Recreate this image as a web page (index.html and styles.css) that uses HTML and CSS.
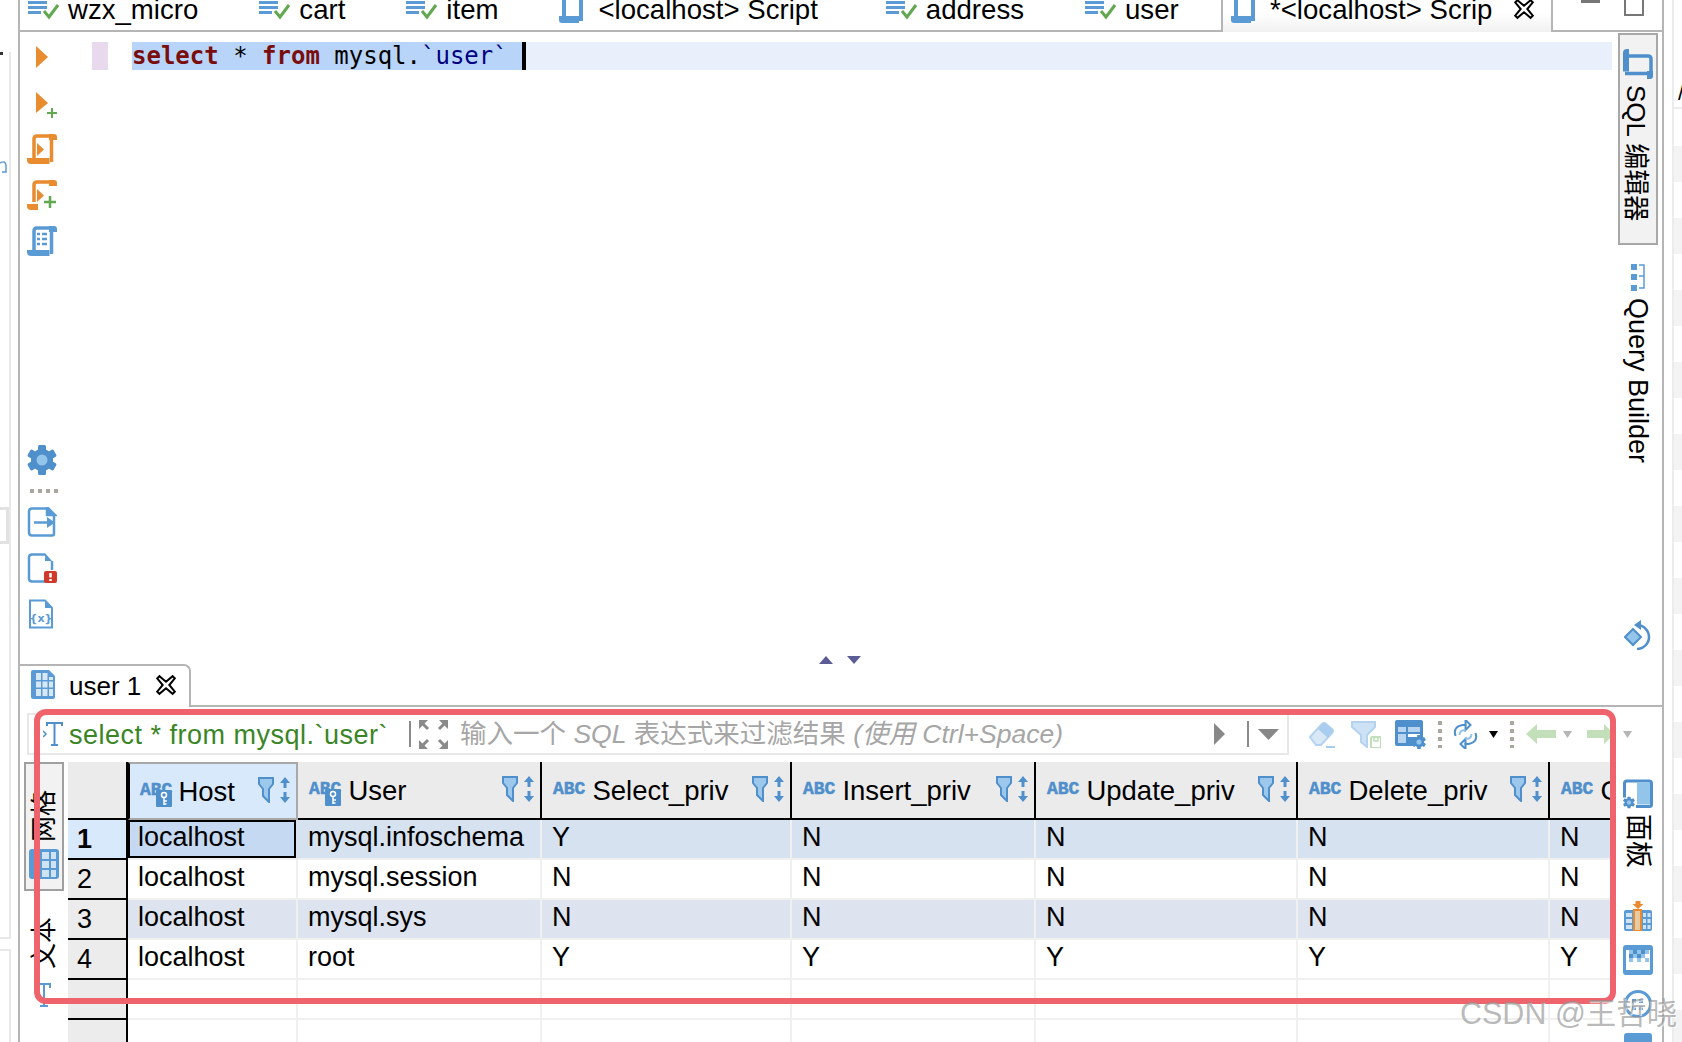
FILE: index.html
```html
<!DOCTYPE html>
<html lang="zh">

<head>
    <meta charset="UTF-8">
    <meta name="viewport" content="width=device-width, initial-scale=1.0">
    <link rel="stylesheet" href="styles.css">
    <title>SQL Editor</title>
</head>

<body>

    <svg class="sprite" xmlns="http://www.w3.org/2000/svg">
        <symbol id="i-list" viewBox="0 0 32 20">
            <path d="M0 2.500h19M0 7.500h19M0 12.500h13" stroke="#5b9bd5" stroke-width="3" fill="none" />
            <path d="M16 11l5 6 9-12" stroke="#62a850" stroke-width="3" fill="none" />
        </symbol>
        <symbol id="i-scroll" viewBox="0 0 30 30">
            <path d="M7 24V5q0-3 3-3h16" stroke="currentColor" stroke-width="3.500" fill="none" />
            <path d="M24.500 2V28" stroke="currentColor" stroke-width="3.500" fill="none" />
            <path d="M22 0h5q3 0 3 3v3h-8zM0 24h22.500v6H4q-4 0-4-4z" fill="currentColor" />
        </symbol>
        <symbol id="i-close" viewBox="0 0 20 20">
            <path d="M2 4l2-2 6 5 6-5 2 2-5 6 5 6-2 2-6-5-6 5-2-2 5-6z" fill="#fff" stroke="#000" stroke-width="1.800" />
        </symbol>
        <symbol id="i-funnel" viewBox="0 0 16 26">
            <path d="M1 1H15V7L11 12V25L5 19V12L1 7Z" fill="#9cc8ec" stroke="#4f8fcb" stroke-width="2" />
        </symbol>
        <symbol id="i-sort" viewBox="0 0 10 26">
            <path d="M5 0l5 6H6.500v5h-3V6H0zM5 26l5-6H6.500v-5h-3v5H0z" fill="#4f8fcb" />
        </symbol>
        <symbol id="i-key" viewBox="0 0 16 17">
            <rect width="16" height="17" rx="1" fill="#4f8fcb" />
            <circle cx="8" cy="5" r="2.500" fill="none" stroke="#fff" stroke-width="1.500" />
            <path d="M8 7.500V15M8 11h3M8 14h2.500" stroke="#fff" stroke-width="1.500" fill="none" />
        </symbol>
        <symbol id="i-gear" viewBox="0 0 30 30">
            <g fill="#4f8fcb">
                <circle cx="15" cy="15" r="11" />
                <rect x="11" y="0" width="8" height="30" rx="1.500" />
                <rect x="11" y="0" width="8" height="30" rx="1.500" transform="rotate(60 15 15)" />
                <rect x="11" y="0" width="8" height="30" rx="1.500" transform="rotate(120 15 15)" />
            </g>
            <circle cx="15" cy="15" r="5.500" fill="#93c4ea" />
        </symbol>
    </svg>

    <div class="page">

        <div class="side-strip">
            <div class="strip-panel">
                <span class="strip-tick"></span>
                <svg class="strip-arc" viewBox="0 0 7 14">
                    <path d="M0 4q5-3 6 2v7h-4" fill="none" stroke="#5b9bd5" stroke-width="1.500" />
                </svg>
                <span class="strip-box"></span>
            </div>
            <div class="strip-panel strip-panel-low"></div>
        </div>

        <div class="workbench">

            <div class="tabbar">
                <div class="tab-list">
                    <div class="tab"><svg class="tab-icon"><use href="#i-list" /></svg>wzx_micro</div>
                    <div class="tab"><svg class="tab-icon"><use href="#i-list" /></svg>cart</div>
                    <div class="tab"><svg class="tab-icon"><use href="#i-list" /></svg>item</div>
                    <div class="tab tab-script"><svg class="tab-scroll" viewBox="0 0 25 23">
                            <path d="M5 0V16M22 0V21" stroke="#5b9bd5" stroke-width="4" fill="none" />
                            <path d="M0 16h20v7H3q-3 0-3-3z" fill="#5b9bd5" />
                        </svg>&lt;localhost&gt; Script</div>
                    <div class="tab tab-address"><svg class="tab-icon"><use href="#i-list" /></svg>address</div>
                    <div class="tab"><svg class="tab-icon"><use href="#i-list" /></svg>user</div>
                </div>
                <div class="tab-active">
                    <svg class="tab-scroll" viewBox="0 0 25 23">
                        <path d="M5 0V16M22 0V21" stroke="#5b9bd5" stroke-width="4" fill="none" />
                        <path d="M0 16h20v7H3q-3 0-3-3z" fill="#5b9bd5" />
                    </svg>
                    <span class="tab-active-name">*&lt;localhost&gt; Scrip</span>
                    <svg class="tab-close"><use href="#i-close" /></svg>
                </div>
                <div class="window-btns">
                    <span class="btn-min"></span>
                    <span class="btn-max"></span>
                </div>
            </div>

            <div class="editor">
                <div class="editor-tools">
                    <div class="tool-group">
                        <svg class="tool" viewBox="0 0 30 30"><path d="M9 4l12 11L9 26z" fill="#e98b2f" /></svg>
                        <svg class="tool" viewBox="0 0 30 30">
                            <path d="M9 4l12 11L9 25z" fill="#e98b2f" />
                            <path d="M25 20v10M20 25h10" stroke="#62a850" stroke-width="2" />
                        </svg>
                        <svg class="tool tool-orange" viewBox="0 0 30 30">
                            <use href="#i-scroll" />
                            <path d="M10 9l7 6.500-7 6.500z" fill="#e98b2f" />
                        </svg>
                        <svg class="tool tool-orange" viewBox="0 0 30 30">
                            <path d="M7 22V5q0-3 3-3h16" stroke="currentColor" stroke-width="3.500" fill="none" />
                            <path d="M22 0h5q3 0 3 3v3h-8zM0 24h11v6H4q-4 0-4-4z" fill="currentColor" />
                            <path d="M10 9l7 6.500-7 6.500z" fill="#e98b2f" />
                            <path d="M23 16v12M17 22h12" stroke="#62a850" stroke-width="2.500" />
                        </svg>
                        <svg class="tool tool-blue" viewBox="0 0 30 30">
                            <use href="#i-scroll" />
                            <path d="M10 8h3M15 8h5M10 13h3M15 13h5M10 18h3M15 18h5" stroke="#5b9bd5" stroke-width="2.500" />
                        </svg>
                    </div>
                    <div class="tool-group">
                        <svg class="tool"><use href="#i-gear" /></svg>
                        <div class="tool-dots"></div>
                        <svg class="tool" viewBox="0 0 30 30">
                            <path d="M20 1.500H5q-3 0-3 3v21q0 3 3 3h20q2 0 2-2V8z" fill="#fff" stroke="#5b9bd5" stroke-width="2.500" />
                            <path d="M20 0v8h8zM7 15.500h17" fill="#5b9bd5" stroke="#5b9bd5" stroke-width="2.500" />
                            <path d="M20 10l8 5.500-8 5.500z" fill="#5b9bd5" />
                        </svg>
                        <svg class="tool" viewBox="0 0 30 30">
                            <path d="M18 1.500H5q-3 0-3 3v21q0 3 3 3h14M25 17V8z" fill="#fff" stroke="#5b9bd5" stroke-width="2.500" />
                            <path d="M18 0l7 8h-7z" fill="#5b9bd5" />
                            <rect x="17" y="18" width="13" height="12" rx="2" fill="#cf3a2a" />
                            <path d="M23.500 20v4.500M23.500 26v2" stroke="#fff" stroke-width="2.500" />
                        </svg>
                        <svg class="tool" viewBox="0 0 30 30">
                            <path d="M3 1.500h15L25 9v19.500H3z" fill="#fff" stroke="#5b9bd5" stroke-width="2" />
                            <path d="M18 1v8h7z" fill="#5b9bd5" />
                            <text x="14" y="23" class="tool-var">{x}</text>
                        </svg>
                    </div>
                </div>

                <div class="gutter"><span class="gutter-mark"></span></div>

                <div class="code-area">
                    <div class="code-line"><span class="code-sel"><b class="kw">select</b> * <b class="kw">from</b> mysql.<span class="quoted">`user`</span> </span><span class="caret"></span></div>
                    <div class="sash">
                        <svg class="sash-arrow" viewBox="0 0 14 8"><path d="M7 0l7 8H0z" /></svg>
                        <svg class="sash-arrow" viewBox="0 0 14 8"><path d="M0 0h14L7 8z" /></svg>
                    </div>
                </div>

                <div class="editor-side">
                    <div class="side-tab">
                        <svg class="side-tab-icon"><use href="#i-scroll" /></svg>
                        <span class="vtext">SQL 编辑器</span>
                    </div>
                    <div class="side-item">
                        <svg class="side-qb-icon" viewBox="0 0 14 27">
                            <path d="M0 0h6v6H0zM0 10h6v6H0zM0 21h6v6H0z" fill="#5b9bd5" />
                            <path d="M8 1h5v23H8M8 12h5" fill="none" stroke="#5b9bd5" stroke-width="1.500" />
                        </svg>
                        <span class="vtext">Query Builder</span>
                    </div>
                    <svg class="side-history" viewBox="0 0 28 30">
                        <path d="M9 9l8 8-8 8-8-8z" fill="#93c4ea" stroke="#4f8fcb" stroke-width="2" />
                        <path d="M13 5a11 11 0 1 1 0 24" fill="none" stroke="#4f8fcb" stroke-width="2.500" />
                        <path d="M17 0v10l-7-5z" fill="#4f8fcb" />
                    </svg>
                </div>
            </div>

            <div class="results">
                <div class="result-tabbar">
                    <div class="result-tab">
                        <svg class="result-tab-icon" viewBox="0 0 24 29">
                            <path d="M2 0h16l6 6v21q0 2-2 2H2q-2 0-2-2V2q0-2 2-2z" fill="#5b9bd5" />
                            <path d="M5 3h5v7H5zM11.500 3h5v7h-5zM18 7h4v3h-4zM5 11.500h5v6H5zM11.500 11.500h5v6h-5zM18 11.500h4v6h-4zM5 19h5v7H5zM11.500 19h5v7h-5zM18 19h4v7h-4z" fill="#d6e7f6" />
                        </svg>
                        <span>user 1</span>
                        <svg class="tab-close"><use href="#i-close" /></svg>
                    </div>
                </div>

                <div class="filter-row">
                    <div class="filter-box">
                        <svg class="filter-t" viewBox="0 0 20 24">
                            <path d="M4 4V1h15v3M11.500 1v22M8 23h7" fill="none" stroke="#4f8fcb" stroke-width="2" />
                            <path d="M0 9l3 3-3 3" fill="none" stroke="#4f8fcb" stroke-width="1.500" />
                        </svg>
                        <span class="filter-sql">select * from mysql.`user`</span>
                        <span class="filter-sep"></span>
                        <svg class="filter-expand" viewBox="0 0 29 29">
                            <path d="M0 0h9L0 9zM29 0v9l-9-9zM0 29v-9l9 9zM29 29h-9l9-9z" fill="#8a8a8a" />
                            <path d="M3 3l6 6M26 3l-6 6M3 26l6-6M26 26l-6-6" stroke="#8a8a8a" stroke-width="3" />
                        </svg>
                        <span class="filter-hint">输入一个 <i>SQL</i> 表达式来过滤结果 <i>(使用 Ctrl+Space)</i></span>
                        <svg class="filter-go" viewBox="0 0 11 22"><path d="M0 0l11 11L0 22z" /></svg>
                        <span class="filter-sep filter-sep-end"></span>
                        <svg class="filter-drop" viewBox="0 0 21 11"><path d="M0 0h21L10.500 11z" /></svg>
                    </div>

                    <div class="toolbar">
                        <svg class="tb-icon" width="27" height="27" viewBox="0 0 27 27">
                            <path d="M2 16L14 3q2-2 4 0l6 5q2 2 0 4L13 24H8z" fill="#d8e8f6" stroke="#b5d3ee" stroke-width="2" />
                            <path d="M10 8l10 9 4-5q2-2 0-4l-6-5q-2-2-4 0z" fill="#a9cdee" />
                            <path d="M18 26h9" stroke="#a9cdee" stroke-width="2" />
                        </svg>
                        <svg class="tb-icon tb-funnel" width="30" height="27" viewBox="0 0 30 27">
                            <path d="M1 1h23v5l-8 8v12l-6-5v-7L1 6z" fill="#cde2f5" stroke="#b5d3ee" stroke-width="2" />
                            <rect x="20" y="16" width="10" height="11" rx="1.500" fill="#fff" stroke="#bfdfb6" stroke-width="2" />
                            <path d="M23 16v4h4v-4" fill="none" stroke="#bfdfb6" stroke-width="1.500" />
                        </svg>
                        <svg class="tb-icon tb-table" width="31" height="29" viewBox="0 0 31 29">
                            <rect width="28" height="26" rx="2" fill="#4f8fcb" />
                            <path d="M3 7h8v5H3zM3 14h8v9H3zM13 7h12v5H13z" fill="#b7d5f0" />
                            <path d="M13 14h12v3H13z" fill="#fff" />
                            <use href="#i-gear" x="17" y="15" width="14" height="14" />
                        </svg>
                        <div class="tb-dots"></div>
                        <svg class="tb-icon tb-refresh" width="27" height="29" viewBox="0 0 26 29">
                            <path d="M3 16Q0 7 10 5h4M23 13q3 9-7 11h-4" fill="none" stroke="#4f8fcb" stroke-width="2" />
                            <path d="M13 0l5 5-5 5zM13 19l-5 5 5 5z" fill="none" stroke="#4f8fcb" stroke-width="2" />
                            <path d="M7 15q0-5 6-5M19 14q0 5-6 5" fill="none" stroke="#93c4ea" stroke-width="2" />
                        </svg>
                        <svg class="tb-caret tb-refresh" viewBox="0 0 9 7"><path d="M0 0h9L4.500 7z" /></svg>
                        <div class="tb-dots"></div>
                        <svg class="tb-icon" width="30" height="20" viewBox="0 0 30 20"><path d="M0 10L11 0v6h19v8H11v6z" fill="#c3dfb9" /></svg>
                        <svg class="tb-caret tb-caret-off tb-back" viewBox="0 0 9 7"><path d="M0 0h9L4.500 7z" /></svg>
                        <svg class="tb-icon tb-next" width="27" height="20" viewBox="0 0 27 20"><path d="M27 10L17 0v6H0v8h17v6z" fill="#c3dfb9" /></svg>
                        <svg class="tb-caret tb-caret-off tb-last" viewBox="0 0 9 7"><path d="M0 0h9L4.500 7z" /></svg>
                    </div>
                </div>

                <div class="result-body">
                    <div class="view-tabs">
                        <div class="view-tab view-tab-on">
                            <span class="vtext vtext-up">网格</span>
                            <svg class="view-icon" viewBox="0 0 30 30">
                                <rect width="30" height="30" rx="3" fill="#5b9bd5" />
                                <path d="M5 3h6v7H5zM13 3h7v7h-7zM22 3h5v7h-5zM5 12h6v7H5zM13 12h7v7h-7zM22 12h5v7h-5zM5 21h6v7H5zM13 21h7v7h-7zM22 21h5v7h-5z" fill="#cfe3f5" />
                            </svg>
                        </div>
                        <div class="view-tab">
                            <span class="vtext vtext-up">文本</span>
                            <svg class="view-text-icon" viewBox="0 0 14 24">
                                <path d="M1 5V1h12v4M7 1v22M3 23h8" fill="none" stroke="#5b9bd5" stroke-width="2" />
                            </svg>
                        </div>
                    </div>

                    <div class="grid-wrap">
                        <table class="grid">
                            <colgroup>
                                <col class="c-num">
                                <col class="c-host">
                                <col class="c-user">
                                <col class="c-select">
                                <col class="c-insert">
                                <col class="c-update">
                                <col class="c-delete">
                                <col class="c-create">
                            </colgroup>
                            <thead>
                                <tr>
                                    <th class="num-head"></th>
                                    <th class="head-on">
                                        <div class="col-head"><span class="abc abc-key">ABC</span><svg class="key"><use href="#i-key" /></svg><span class="col-name">Host</span><svg class="funnel"><use href="#i-funnel" /></svg><svg class="sort"><use href="#i-sort" /></svg></div>
                                    </th>
                                    <th>
                                        <div class="col-head"><span class="abc abc-key">ABC</span><svg class="key"><use href="#i-key" /></svg><span class="col-name">User</span><svg class="funnel"><use href="#i-funnel" /></svg><svg class="sort"><use href="#i-sort" /></svg></div>
                                    </th>
                                    <th>
                                        <div class="col-head"><span class="abc">ABC</span><span class="col-name">Select_priv</span><svg class="funnel"><use href="#i-funnel" /></svg><svg class="sort"><use href="#i-sort" /></svg></div>
                                    </th>
                                    <th>
                                        <div class="col-head"><span class="abc">ABC</span><span class="col-name">Insert_priv</span><svg class="funnel"><use href="#i-funnel" /></svg><svg class="sort"><use href="#i-sort" /></svg></div>
                                    </th>
                                    <th>
                                        <div class="col-head"><span class="abc">ABC</span><span class="col-name">Update_priv</span><svg class="funnel"><use href="#i-funnel" /></svg><svg class="sort"><use href="#i-sort" /></svg></div>
                                    </th>
                                    <th>
                                        <div class="col-head"><span class="abc">ABC</span><span class="col-name">Delete_priv</span><svg class="funnel"><use href="#i-funnel" /></svg><svg class="sort"><use href="#i-sort" /></svg></div>
                                    </th>
                                    <th>
                                        <div class="col-head"><span class="abc">ABC</span><span class="col-name">Create_priv</span></div>
                                    </th>
                                </tr>
                            </thead>
                            <tbody>
                                <tr class="row-first">
                                    <th class="num num-on">1</th>
                                    <td class="cell-on">localhost</td>
                                    <td>mysql.infoschema</td>
                                    <td>Y</td>
                                    <td>N</td>
                                    <td>N</td>
                                    <td>N</td>
                                    <td>N</td>
                                </tr>
                                <tr>
                                    <th class="num">2</th>
                                    <td>localhost</td>
                                    <td>mysql.session</td>
                                    <td>N</td>
                                    <td>N</td>
                                    <td>N</td>
                                    <td>N</td>
                                    <td>N</td>
                                </tr>
                                <tr class="row-alt">
                                    <th class="num">3</th>
                                    <td>localhost</td>
                                    <td>mysql.sys</td>
                                    <td>N</td>
                                    <td>N</td>
                                    <td>N</td>
                                    <td>N</td>
                                    <td>N</td>
                                </tr>
                                <tr>
                                    <th class="num">4</th>
                                    <td>localhost</td>
                                    <td>root</td>
                                    <td>Y</td>
                                    <td>Y</td>
                                    <td>Y</td>
                                    <td>Y</td>
                                    <td>Y</td>
                                </tr>
                                <tr>
                                    <th class="num"></th>
                                    <td></td><td></td><td></td><td></td><td></td><td></td><td></td>
                                </tr>
                                <tr>
                                    <th class="num"></th>
                                    <td></td><td></td><td></td><td></td><td></td><td></td><td></td>
                                </tr>
                            </tbody>
                        </table>
                    </div>

                    <div class="panels">
                        <svg class="panel-icon" viewBox="0 0 30 29">
                            <path d="M4 1.500h22q2.500 0 2.500 2.500v21q0 2-2 2H13" fill="none" stroke="#4f8fcb" stroke-width="3" />
                            <path d="M1.500 18V4q0-2.500 2.500-2.500" fill="none" stroke="#4f8fcb" stroke-width="3" />
                            <rect x="14" y="3" width="13" height="22" fill="#93c4ea" />
                            <use href="#i-gear" x="0" y="17" width="12" height="12" />
                        </svg>
                        <span class="vtext panel-label">面板</span>
                        <svg class="panel-icon panel-icon-col" viewBox="0 0 28 30">
                            <rect y="9" width="28" height="21" rx="2" fill="#5b9bd5" />
                            <path d="M2 12h6v4H2zM2 18h6v4H2zM2 24h6v4H2zM19 12h3v4h-3zM23.500 12h3v4h-3zM19 18h3v4h-3zM23.500 18h3v4h-3zM19 24h3v4h-3zM23.500 24h3v4h-3z" fill="#cfe3f5" />
                            <rect x="10" y="9" width="7" height="21" fill="#e7c9a4" stroke="#e98b2f" stroke-width="2" />
                            <path d="M11.500 0h5v3h3l-5.500 5-5.500-5h3z" fill="#e98b2f" />
                        </svg>
                        <svg class="panel-icon" viewBox="0 0 30 30">
                            <rect width="30" height="30" rx="3" fill="#5b9bd5" />
                            <rect x="3" y="5" width="24" height="20" fill="#fff" />
                            <path d="M6 5h4v4H6zM14 5h4v4h-4zM22 5h4v4h-4zM10 9h4v4h-4zM18 9h4v4h-4zM6 13h4v4H6zM14 13h4v4h-4zM22 13h4v4h-4z" fill="#93c4ea" />
                            <path d="M10 5h4v4h-4zM18 5h4v4h-4zM6 9h4v4H6zM14 9h4v4h-4z" fill="#4f8fcb" />
                        </svg>
                        <svg class="panel-icon" viewBox="0 0 28 30">
                            <circle cx="14" cy="15" r="12.500" fill="#fff" stroke="#5b9bd5" stroke-width="3" />
                            <path d="M8 10h4v4H8zM15 10h4v4h-4zM8 17h4v4H8zM15 17h4v4h-4z" fill="#5b9bd5" />
                        </svg>
                        <svg class="panel-icon" viewBox="0 0 28 30">
                            <rect width="28" height="30" rx="3" fill="#5b9bd5" />
                        </svg>
                    </div>
                </div>
            </div>
        </div>

        <div class="far-strip">
            <div class="far-top"><span class="far-char">/</span></div>
            <div class="far-note"></div>
            <div class="far-rows"></div>
        </div>
    </div>

    <div class="annotation"></div>
    <div class="watermark">CSDN @王哲晓</div>

</body>

</html>
```

FILE: styles.css
```css
* {
    box-sizing: border-box;
}

body {
    position: relative;
    margin: 0;
    width: 1682px;
    height: 1042px;
    overflow: hidden;
    background-color: #fff;
    color: #000;
    font-family: "Liberation Sans", "Noto Sans CJK SC", sans-serif;
    font-size: 27px;
}

svg {
    display: block;
    flex: none;
}

.sprite {
    display: none;
}

.page {
    display: flex;
    height: 1042px;
}

/* far left strip, the neighbouring view cut off by the crop */
.side-strip {
    width: 20px;
    flex: none;
    border-right: 2px solid #b5b5b5;
}

.strip-panel {
    position: relative;
    width: 11px;
    height: 887px;
    border-right: 2px solid #e8e8e8;
    border-bottom: 2px solid #e8e8e8;
}

.strip-panel-low {
    height: 145px;
    margin-top: 10px;
    border-top: 2px solid #e8e8e8;
    border-bottom: 0;
}

.strip-tick {
    display: block;
    width: 3px;
    height: 3px;
    margin-top: 52px;
    background-color: #333;
}

.strip-arc {
    width: 7px;
    height: 14px;
    margin-top: 104px;
}

.strip-box {
    display: block;
    width: 9px;
    height: 37px;
    margin-top: 334px;
    background-color: #fff;
    border: 3px solid #e2e2e2;
    border-left: 0;
}

.workbench {
    flex: 1;
    min-width: 0;
    display: flex;
    flex-direction: column;
}

/* top tabs */
.tabbar {
    display: flex;
    height: 32px;
    flex: none;
    overflow: hidden;
    font-size: 27.600px;
}

.tab-list {
    display: flex;
    gap: 61px;
    width: 1201px;
    flex: none;
    padding-left: 8px;
    border-bottom: 2px solid #b5b5b5;
    line-height: 32px;
}

.tab {
    display: flex;
    gap: 8px;
    height: 32px;
    margin-top: -6px;
    white-space: nowrap;
}

.tab-icon {
    width: 32px;
    height: 20px;
    margin-top: 6px;
}

.tab-script {
    gap: 14px;
}

.tab-address {
    margin-left: 7px;
}

.tab-scroll {
    width: 25px;
    height: 23px;
    margin-top: 6px;
}

.tab-active {
    display: flex;
    width: 332px;
    flex: none;
    padding-left: 8px;
    line-height: 32px;
    border-left: 2px solid #b5b5b5;
    border-right: 2px solid #b5b5b5;
    background: linear-gradient(#fff 40%, #f1f1f1);
}

.tab-active .tab-scroll {
    margin-top: 0;
}

.tab-active-name {
    margin: -6px 0 0 14px;
    white-space: nowrap;
}

.tab-close {
    width: 22px;
    height: 22px;
}

.tab-active .tab-close {
    margin: -2px 0 0 21px;
}

.window-btns {
    display: flex;
    flex: 1;
    align-items: flex-start;
    gap: 24px;
    padding-left: 28px;
    border-bottom: 2px solid #b5b5b5;
    border-right: 2px solid #b5b5b5;
}

.btn-min {
    width: 19px;
    height: 3px;
    background-color: #777;
}

.btn-max {
    width: 20px;
    height: 16px;
    border: 2px solid #777;
    border-top: 0;
}

/* sql editor */
.editor {
    display: flex;
    flex: 1;
    min-height: 0;
    border-right: 2px solid #b5b5b5;
}

.editor-tools {
    display: flex;
    flex-direction: column;
    justify-content: space-between;
    width: 72px;
    flex: none;
    padding: 10px 0 35px 7px;
}

.tool-group {
    display: flex;
    flex-direction: column;
    gap: 16px;
}

.tool {
    width: 30px;
    height: 30px;
}

.tool-orange {
    color: #e98b2f;
}

.tool-blue {
    color: #5b9bd5;
}

.tool-var {
    font: bold 11px "DejaVu Sans", sans-serif;
    fill: #5b9bd5;
    text-anchor: middle;
}

.tool-dots {
    width: 28px;
    height: 4px;
    margin: -2px 0 -2px 3px;
    background: repeating-linear-gradient(90deg, #a9a79f 0 4px, #fff 4px 8px);
}

.gutter {
    width: 40px;
    flex: none;
    padding-top: 10px;
}

.gutter-mark {
    display: block;
    width: 16px;
    height: 28px;
    background-color: #e8daec;
}

.code-area {
    display: flex;
    flex-direction: column;
    flex: 1;
    min-width: 0;
    padding-top: 10px;
}

.code-line {
    display: flex;
    height: 28px;
    background-color: #e9f0fb;
    font-family: "DejaVu Sans Mono", monospace;
    font-size: 24px;
    line-height: 28px;
    white-space: pre;
}

.code-sel {
    background-color: #b8d5f9;
}

.kw {
    color: #7a0e0e;
}

.quoted {
    color: #000080;
}

.caret {
    width: 4px;
    background-color: #000;
}

.sash {
    display: flex;
    gap: 14px;
    margin: auto 0 0 687px;
}

.sash-arrow {
    width: 14px;
    height: 8px;
    fill: #5c5c96;
}

.editor-side {
    display: flex;
    flex-direction: column;
    align-items: center;
    width: 50px;
    flex: none;
    padding: 1px 4px 14px 6px;
}

.vtext {
    display: block;
    writing-mode: vertical-rl;
    text-orientation: sideways;
    font-size: 26px;
    line-height: 28px;
    white-space: nowrap;
}

.vtext-up {
    transform: rotate(180deg);
}

.side-tab {
    display: flex;
    flex-direction: column;
    align-items: center;
    gap: 6px;
    width: 40px;
    height: 212px;
    flex: none;
    padding-top: 14px;
    border: 2px solid #a8a8a8;
    background-color: #f2f2f2;
}

.side-tab-icon {
    width: 30px;
    height: 30px;
    color: #4f8fcb;
    transform: rotate(90deg);
}

.side-tab .vtext {
    margin-right: 4px;
}

.side-item {
    display: flex;
    flex-direction: column;
    align-items: center;
    gap: 7px;
    margin-top: 19px;
}

.side-qb-icon {
    width: 14px;
    height: 27px;
}

.side-item .vtext {
    margin-right: 1px;
    font-size: 27px;
}

.side-history {
    width: 28px;
    height: 30px;
    margin-top: auto;
}

/* result set */
.results {
    height: 378px;
    flex: none;
    display: flex;
    flex-direction: column;
    border-right: 2px solid #b5b5b5;
}

.result-tabbar {
    display: flex;
    height: 43px;
    flex: none;
    border-bottom: 2px solid #b5b5b5;
}

.result-tab {
    display: flex;
    align-items: center;
    gap: 14px;
    width: 171px;
    height: 43px;
    padding-left: 11px;
    background-color: #fff;
    border-top: 2px solid #b5b5b5;
    border-right: 2px solid #b5b5b5;
    border-top-right-radius: 7px;
    font-size: 26px;
}

.result-tab .tab-close {
    margin: 0 0 4px 0;
}

.result-tab-icon {
    width: 24px;
    height: 29px;
    margin-bottom: 4px;
}

.filter-row {
    display: flex;
    height: 42px;
    flex: none;
    margin-top: 6px;
    padding-left: 7px;
}

.filter-box {
    display: flex;
    align-items: center;
    width: 1262px;
    flex: none;
    padding: 0 8px 0 14px;
    border: 2px solid #e8e8e8;
}

.filter-t {
    width: 20px;
    height: 24px;
}

.filter-sql {
    width: 340px;
    flex: none;
    margin: 2px 0 0 6px;
    color: #3a8526;
    font-size: 27px;
    letter-spacing: 0.5px;
    white-space: nowrap;
}

.filter-sep {
    width: 2px;
    height: 26px;
    flex: none;
    background-color: #8a8a8a;
}

.filter-expand {
    width: 29px;
    height: 29px;
    margin-left: 8px;
}

.filter-hint {
    flex: 1;
    margin: -6px 0 0 12px;
    color: #a6a6a6;
    font-size: 26.500px;
    white-space: nowrap;
}

.filter-go {
    width: 11px;
    height: 22px;
    fill: #888;
}

.filter-sep-end {
    margin-left: 22px;
}

.filter-drop {
    width: 21px;
    height: 11px;
    margin-left: 9px;
    fill: #888;
}

.toolbar {
    display: flex;
    align-items: center;
    gap: 12px;
    padding-left: 19px;
}

.tb-funnel {
    margin-left: 4px;
}

.tb-table {
    margin-left: 2px;
}

.tb-refresh {
    margin-left: -2px;
}

.tb-back {
    margin-left: -5px;
}

.tb-next {
    margin-left: 3px;
}

.tb-last {
    margin-left: -3px;
}

.tb-dots {
    width: 4px;
    height: 27px;
    flex: none;
    background: repeating-linear-gradient(#a9a79f 0 4px, #fff 4px 8px);
}

.tb-caret {
    width: 9px;
    height: 7px;
    fill: #000;
}

.tb-caret-off {
    fill: #b5b5b5;
}

.result-body {
    display: flex;
    flex: 1;
    min-height: 0;
    margin-top: 7px;
}

.view-tabs {
    width: 40px;
    flex: none;
    margin: 0 4px;
}

.view-tab {
    display: flex;
    flex-direction: column;
    align-items: center;
    gap: 7px;
    padding-top: 26px;
}

.view-tab-on {
    height: 129px;
    border: 2px solid #a0a0a0;
    background-color: #f2f2f2;
}

.view-icon {
    width: 30px;
    height: 30px;
}

.view-text-icon {
    width: 14px;
    height: 24px;
    margin-top: 7px;
}

/* data grid */
.grid-wrap {
    width: 1544px;
    flex: none;
    overflow: hidden;
}

.grid {
    width: 1544px;
    table-layout: fixed;
    border-collapse: separate;
    border-spacing: 0;
}

.c-num { width: 60px; }
.c-host { width: 170px; }
.c-user { width: 244px; }
.c-select { width: 250px; }
.c-insert { width: 244px; }
.c-update { width: 262px; }
.c-delete { width: 252px; }
.c-create { width: 62px; }

.grid thead th {
    height: 56px;
    padding: 0;
    overflow: hidden;
    background-color: #ebebeb;
    border-right: 2px solid #000;
    border-bottom: 2px solid #000;
    font-weight: normal;
}

.grid thead th.head-on {
    background-color: #d9e9fc;
    border: 2px solid #a8a8a8;
    border-left-color: #000;
}

.grid thead th:last-child {
    border-right: 0;
}

.col-head {
    display: flex;
    align-items: center;
    height: 54px;
    padding: 0 6px 0 11px;
    white-space: nowrap;
}

.abc {
    color: #4f8fcb;
    font-family: "Liberation Mono", monospace;
    font-size: 18px;
    font-weight: bold;
    line-height: 13px;
    margin-top: -2px;
    -webkit-text-stroke: 0.5px #4f8fcb;
}

.key {
    width: 16px;
    height: 17px;
    margin: 15px 0 0 -16px;
}

.col-name {
    margin: 2px auto 0 7px;
    font-size: 27.500px;
}

.head-on .abc {
    margin-left: -1px;
}

.head-on .col-name {
    margin-left: 6px;
}

.funnel {
    width: 16px;
    height: 26px;
    margin-top: -3px;
}

.sort {
    width: 10px;
    height: 26px;
    margin: -3px 0 0 6px;
}

.grid td {
    height: 40px;
    padding: 0 0 4px 10px;
    overflow: hidden;
    border-right: 2px solid #f0f0f0;
    border-bottom: 2px solid #f0f0f0;
    white-space: nowrap;
}

.grid td:last-child {
    border-right: 0;
}

.row-first td {
    background-color: #d7e2f0;
}

.row-alt td {
    background-color: #dde4ef;
}

.grid .cell-on {
    background-color: #c5d9f3;
    box-shadow: inset 0 0 0 2px #000;
    border-right-color: #d7e2f0;
    border-bottom-color: #f0f0f0;
}

.num {
    padding: 1px 0 0 9px;
    background-color: #ececec;
    border-right: 2px solid #000;
    border-bottom: 2px solid #000;
    font-weight: normal;
    text-align: left;
}

.grid .num-on {
    background-color: #d9e9fc;
    font-weight: bold;
}

/* right hand panel icons */
.panels {
    display: flex;
    flex-direction: column;
    align-items: center;
    gap: 14px;
    flex: 1;
    padding-top: 17px;
    padding-left: 2px;
}

.panel-icon {
    width: 30px;
    height: 30px;
}

.panel-label {
    margin-top: -9px;
    font-size: 27px;
    line-height: 28px;
}

.panel-icon-col {
    margin-top: 19px;
}

/* rightmost strip, another view cut off by the crop */
.far-strip {
    width: 18px;
    flex: none;
    padding-left: 8px;
}

.far-top {
    height: 109px;
    border-left: 2px solid #ececec;
    border-bottom: 2px solid #ececec;
    overflow: hidden;
    padding: 80px 0 0 2px;
    font-size: 22px;
    line-height: 26px;
}

.far-char {
    display: block;
    margin-left: 2px;
}

.far-note {
    height: 37px;
    border-left: 2px solid #ececec;
}

.far-rows {
    height: 896px;
    border-left: 2px solid #ececec;
    background: repeating-linear-gradient(#f3f3f3 0 36px, #fff 36px 72px);
}

/* overlays drawn on top of the screenshot */
.annotation {
    position: absolute;
    left: 34px;
    top: 709px;
    width: 1582px;
    height: 295px;
    border: 6px solid #ee636c;
    border-radius: 12px;
}

.watermark {
    position: absolute;
    left: 1460px;
    top: 995px;
    color: rgba(140, 140, 140, 0.6);
    font-size: 30.500px;
    line-height: 36px;
    text-shadow: 1px 1px 1px rgba(255, 255, 255, 0.7);
    white-space: nowrap;
}
```
